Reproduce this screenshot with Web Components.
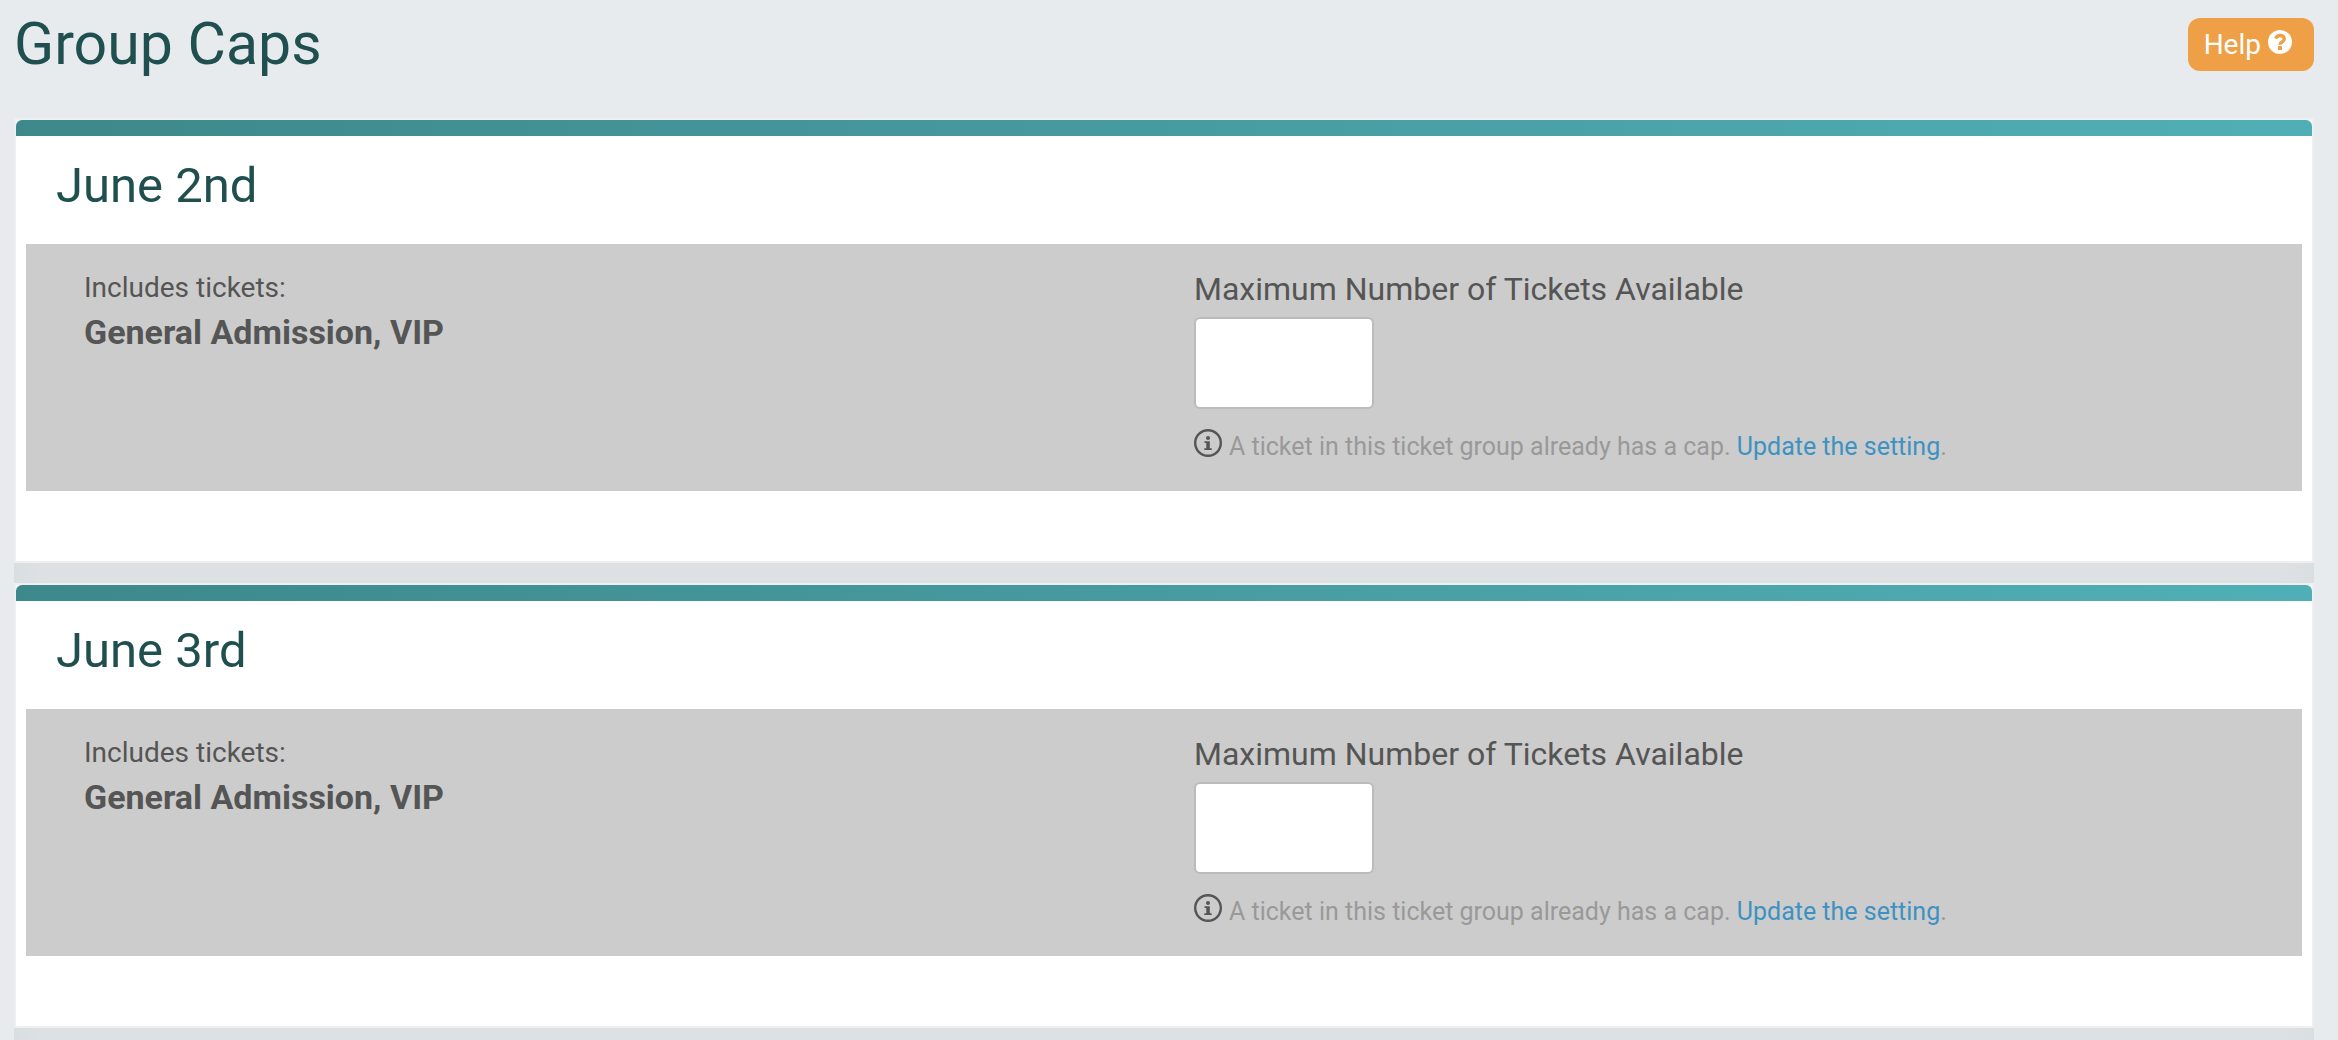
<!DOCTYPE html>
<html lang="en">
<head>
<meta charset="utf-8">
<meta name="viewport" content="width=device-width, initial-scale=1">
<title>Group Caps</title>
<style>
    body {
        margin: 0;
        background: #e7ebee;
        color: #555;
        font-family: Roboto, sans-serif;
    }
</style>
</head>
<body>
<caps-page heading="Group Caps">
    <help-button slot="action">Help</help-button>
    <group-card heading="June 2nd">
        <ticket-cap tickets="General Admission, VIP"></ticket-cap>
    </group-card>
    <group-card heading="June 3rd">
        <ticket-cap tickets="General Admission, VIP"></ticket-cap>
    </group-card>
</caps-page>

<script>
class CapsPage extends HTMLElement {
    constructor() {
        super();
        this.attachShadow({ mode: 'open' });
    }

    connectedCallback() {
        this.shadowRoot.innerHTML = /*html*/`
        <style>
            :host {
                display: flex;
                flex-direction: column;
                min-height: 100vh;
            }
            header {
                display: flex;
                justify-content: space-between;
                align-items: flex-start;
                padding: 8px 24px 38px 14px;
            }
            h1 {
                margin: 0;
                font-size: 59px;
                line-height: 72px;
                font-weight: 400;
                color: #1f4f4f;
            }
            .action { padding-top: 10px; }
            main {
                display: flex;
                flex: 1;
                flex-direction: column;
                gap: 20px;
                margin: 0 24px 0 14px;
                background: linear-gradient(90deg, #d9dee1, #dde1e4 30px, #dde1e4 calc(100% - 30px), #d9dee1);
            }
        </style>
        <header>
            <h1>${this.getAttribute('heading')}</h1>
            <div class="action"><slot name="action"></slot></div>
        </header>
        <main><slot></slot></main>
        `;
    }
}

class HelpButton extends HTMLElement {
    constructor() {
        super();
        this.attachShadow({ mode: 'open' });
    }

    connectedCallback() {
        this.shadowRoot.innerHTML = /*html*/`
        <style>
            :host { display: block; }
            button {
                display: flex;
                align-items: flex-start;
                gap: 7px;
                padding: 10px 22px 10px 16px;
                border: 0;
                border-radius: 12px;
                background: #ef9f45;
                color: #fff;
                font: inherit;
                font-size: 28px;
                line-height: 33px;
                cursor: pointer;
            }
            svg {
                width: 24px;
                height: 24px;
                margin-top: 2px;
            }
        </style>
        <button type="button">
            <slot></slot>
            <svg viewBox="0 0 24 24" aria-hidden="true">
                <circle cx="12" cy="12" r="12" fill="#fff"/>
                <path d="M7.6 8.4C8.6 6.4 10 5.5 12.1 5.5c2.400 0 4.200 1.300 4.200 3.400 0 3.300-4.300 2.900-4.300 5.800" fill="none" stroke="#ef9f45" stroke-width="3.400"/>
                <rect x="10" y="16" width="4" height="4" rx=".5" fill="#ef9f45"/>
            </svg>
        </button>
        `;
    }
}

class GroupCard extends HTMLElement {
    constructor() {
        super();
        this.attachShadow({ mode: 'open' });
    }

    connectedCallback() {
        this.shadowRoot.innerHTML = /*html*/`
        <style>
            :host {
                display: block;
                border: 2px solid #efefef;
                background: #fff;
            }
            .bar {
                height: 16px;
                border-radius: 6px 6px 0 0;
                background: linear-gradient(90deg, #3d888b, #50afb6);
            }
            h2 {
                margin: 0;
                padding: 20px 40px 28px;
                font-size: 49px;
                line-height: 60px;
                font-weight: 400;
                color: #1f4f4f;
            }
            .content { padding: 0 10px 70px; }
        </style>
        <div class="bar"></div>
        <h2>${this.getAttribute('heading')}</h2>
        <div class="content"><slot></slot></div>
        `;
    }
}

class TicketCap extends HTMLElement {
    constructor() {
        super();
        this.attachShadow({ mode: 'open' });
    }

    connectedCallback() {
        this.shadowRoot.innerHTML = /*html*/`
        <style>
            :host {
                display: grid;
                grid-template-columns: 1fr 1fr;
                background: #ccc;
            }
            .tickets { padding: 26px 30px 26px 58px; }
            .cap { padding: 26px 30px; }
            p { margin: 0; }
            .tickets p {
                font-size: 28px;
                line-height: 36px;
            }
            strong {
                display: block;
                margin-top: 8px;
                font-size: 34px;
                line-height: 36px;
            }
            label {
                display: block;
                font-size: 32px;
                line-height: 38px;
            }
            input {
                display: block;
                box-sizing: border-box;
                width: 180px;
                height: 92px;
                margin: 9px 0 20px;
                padding: 12px 24px;
                border: 2px solid #bbb;
                border-radius: 6px;
                background: #fff;
                color: inherit;
                font: inherit;
                font-size: 32px;
            }
            .note {
                display: flex;
                align-items: flex-start;
                gap: 7px;
                color: #999;
                font-size: 25px;
                line-height: 36px;
            }
            svg {
                flex: none;
                width: 28px;
                height: 28px;
                color: #555;
            }
            a {
                color: #3d92c2;
                text-decoration: none;
            }
        </style>
        <div class="tickets">
            <p>Includes tickets:</p>
            <strong>${this.getAttribute('tickets')}</strong>
        </div>
        <div class="cap">
            <label for="max">Maximum Number of Tickets Available</label>
            <input id="max" type="text" inputmode="numeric">
            <div class="note">
                <svg viewBox="0 0 28 28" aria-hidden="true">
                    <circle cx="14" cy="14" r="12.800" fill="none" stroke="currentColor" stroke-width="2.400"/>
                    <circle cx="14" cy="9" r="2" fill="currentColor"/>
                    <path d="M10.500 12.200h5.300v7h1.900v1.900h-7.400v-1.900h2v-5.100h-1.800z" fill="currentColor"/>
                </svg>
                <p>A ticket in this ticket group already has a cap. <a href="#">Update the setting</a>.</p>
            </div>
        </div>
        `;
    }
}

customElements.define('caps-page', CapsPage);
customElements.define('help-button', HelpButton);
customElements.define('group-card', GroupCard);
customElements.define('ticket-cap', TicketCap);
</script>
</body>
</html>
